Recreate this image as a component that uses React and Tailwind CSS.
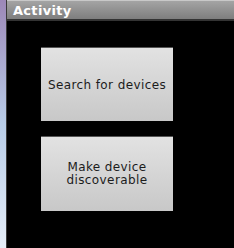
export default function App() {
  const font = { fontFamily: '"DejaVu Sans", sans-serif' };
  return (
    <div className="flex w-[234px] h-[248px] bg-black overflow-hidden" style={font}>
      <div className="w-[6px] h-full bg-gradient-to-b from-[#9c88b8] via-[#b8cde8] to-[#e6eef8]" />
      <div className="w-px h-full bg-[#3a3a3a]" />
      <div className="flex-1 flex flex-col">
        <div className="h-[21px] flex items-center pl-[6px] bg-gradient-to-b from-[#a4a4a4] to-[#7e7e7e] border-t border-[#c8c8c8] border-b-2 border-b-[#333]">
          <span className="text-white font-bold text-[13px] leading-none tracking-[0.3px]">Activity</span>
        </div>
        <div className="flex flex-col pl-[34px] pt-[26px] gap-[15px]">
          <div className="w-[132px] h-[74px] flex items-center justify-center text-center text-[12px] leading-[14px] tracking-[0.4px] text-[#1c1c1c] bg-gradient-to-b from-[#e2e2e2] to-[#c8c8c8] border-t border-[#555]">
            Search for devices
          </div>
          <div className="w-[132px] h-[75px] flex items-center justify-center text-center text-[12px] leading-[13px] tracking-[0.4px] text-[#1c1c1c] bg-gradient-to-b from-[#e2e2e2] to-[#c8c8c8] border-t border-[#555]">
            Make device<br />discoverable
          </div>
        </div>
      </div>
    </div>
  );
}
